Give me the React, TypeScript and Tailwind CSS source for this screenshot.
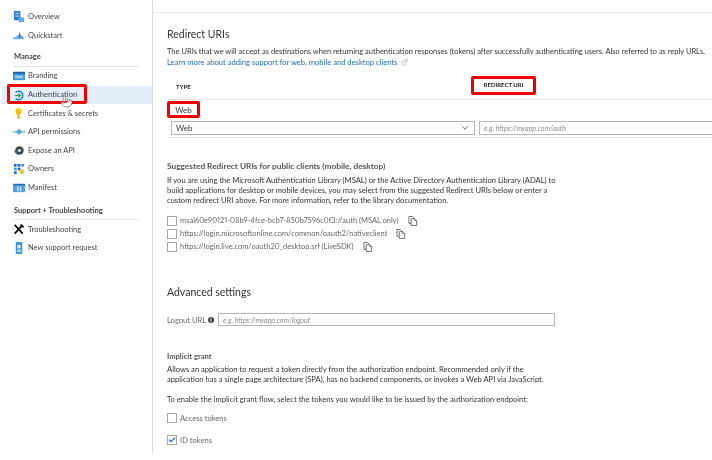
import { ChevronDown, Check, ExternalLink, Pointer } from "lucide-react";

function OverviewIcon() {
  return (
    <svg width="12" height="12" viewBox="0 0 13 13">
      <rect x="1" y="0" width="7" height="10" fill="#2f7fd0" />
      <rect x="2.5" y="2" width="4" height="1" fill="#cfe4f7" />
      <rect x="2.5" y="5" width="4" height="1" fill="#cfe4f7" />
      <rect x="6" y="7" width="6" height="5" fill="#5ea9e6" />
    </svg>
  );
}

function QuickstartIcon() {
  return (
    <svg width="12" height="12" viewBox="0 0 13 13">
      <path d="M0 10 C0 8 2 7 3 8 C4 5 6 5 7 7 C9 5 12 7 12 10 Z" fill="#6db3e6" />
      <path d="M7 2 L9 8 L6 8 Z" fill="#1f6fb5" />
    </svg>
  );
}

function BrandingIcon() {
  return (
    <svg width="12" height="12" viewBox="0 0 13 13">
      <rect x="0" y="2" width="13" height="9" fill="#3c96dc" />
      <rect x="0" y="2" width="13" height="2" fill="#1b5f9e" />
      <rect x="2" y="6" width="9" height="3" fill="#9fd0f2" />
    </svg>
  );
}

function AuthIcon() {
  return (
    <svg width="11" height="11" viewBox="0 0 13 13" fill="none">
      <path d="M3 3 A5 5 0 1 1 3 10" stroke="#1f7fc4" strokeWidth="1.7" />
      <path d="M2 6.5 H8.5" stroke="#2e9e57" strokeWidth="1.5" />
      <path d="M6 4 L9 6.5 L6 9" stroke="#2e9e57" strokeWidth="1.3" />
    </svg>
  );
}

function CertIcon() {
  return (
    <svg width="11" height="11" viewBox="0 0 13 13">
      <circle cx="6.5" cy="4" r="3.6" fill="#f4c20d" />
      <rect x="5.4" y="6" width="2.2" height="6.5" fill="#e2a90b" />
    </svg>
  );
}

function ApiIcon() {
  return (
    <svg width="12" height="12" viewBox="0 0 13 13">
      <rect x="0" y="5.5" width="13" height="1.6" fill="#7fc4a0" />
      <path d="M6.5 3 L10 6.3 L6.5 9.6 L3 6.3 Z" fill="#4aa3df" />
    </svg>
  );
}

function ExposeIcon() {
  return (
    <svg width="12" height="12" viewBox="0 0 13 13">
      <circle cx="7" cy="6" r="4.6" fill="#3f4a50" />
      <circle cx="7" cy="6" r="1.7" fill="#dfe5e8" />
      <path d="M1 7 L4 4 L4 10 Z" fill="#59666d" />
    </svg>
  );
}

function OwnersIcon() {
  return (
    <svg width="12" height="12" viewBox="0 0 13 13">
      <rect x="1" y="1" width="3" height="3" fill="#1d6fb8" />
      <rect x="5" y="1" width="3" height="3" fill="#1d6fb8" />
      <rect x="9" y="1" width="3" height="3" fill="#3f97da" />
      <rect x="1" y="5" width="3" height="3" fill="#3f97da" />
      <rect x="5" y="5" width="3" height="3" fill="#1d6fb8" />
      <rect x="1" y="9" width="3" height="3" fill="#1d6fb8" />
      <circle cx="9.5" cy="9.5" r="2.6" fill="#d9cf3c" />
    </svg>
  );
}

function ManifestIcon() {
  return (
    <svg width="12" height="12" viewBox="0 0 13 13">
      <rect x="0" y="2" width="13" height="9" fill="#4ea1de" />
      <rect x="0" y="2" width="13" height="1.5" fill="#2a6fa8" />
      <rect x="4.5" y="5" width="1.5" height="5" fill="#d7ecfa" />
      <rect x="7.5" y="5" width="1.5" height="5" fill="#d7ecfa" />
    </svg>
  );
}

function ToolsIcon() {
  return (
    <svg width="11" height="11" viewBox="0 0 13 13" fill="none" stroke="#111">
      <path d="M2 1 L11.5 11.5" strokeWidth="2.2" />
      <path d="M11 1.5 L2 11.5" strokeWidth="2.2" />
      <path d="M9 0.5 L12.5 4" strokeWidth="2" />
    </svg>
  );
}

function SupportIcon() {
  return (
    <svg width="12" height="12" viewBox="0 0 13 13">
      <rect x="3" y="0" width="7" height="13" rx="1" fill="#3c96dc" />
      <circle cx="6.5" cy="5" r="2" fill="#e6f3fc" />
      <rect x="4.5" y="8" width="4" height="3" fill="#a9d6f5" />
    </svg>
  );
}

// two overlapping pages, front one with a folded corner
function CopyPages() {
  return (
    <svg width="10" height="10" viewBox="0 0 11 11" fill="white" stroke="#555" strokeWidth="0.9" className="ml-[9px] shrink-0">
      <path d="M1 0.5 H5 L6 1.5 V8 H1 Z" />
      <path d="M3.5 3 H7.5 L9.5 5 V10.5 H3.5 Z" />
      <path d="M7.5 3 V5 H9.5" />
    </svg>
  );
}

const topItems = [
  { label: "Overview", icon: <OverviewIcon /> },
  { label: "Quickstart", icon: <QuickstartIcon /> },
];

const manageItems = [
  { label: "Branding", icon: <BrandingIcon /> },
  { label: "Authentication", icon: <AuthIcon />, active: true },
  { label: "Certificates & secrets", icon: <CertIcon /> },
  { label: "API permissions", icon: <ApiIcon /> },
  { label: "Expose an API", icon: <ExposeIcon /> },
  { label: "Owners", icon: <OwnersIcon /> },
  { label: "Manifest", icon: <ManifestIcon /> },
];

const supportItems = [
  { label: "Troubleshooting", icon: <ToolsIcon /> },
  { label: "New support request", icon: <SupportIcon /> },
];

const suggested = [
  "msal60e90121-08b9-4fce-bcb7-850b7596c0f3://auth (MSAL only)",
  "https://login.microsoftonline.com/common/oauth2/nativeclient",
  "https://login.live.com/oauth20_desktop.srf (LiveSDK)",
];

function NavRow({ label, icon, active }: { label: string; icon: React.ReactNode; active?: boolean }) {
  return (
    <div className={active ? "relative flex h-[18.6px] items-center bg-[#e3eefa] pl-[11px]" : "flex h-[18.6px] items-center pl-[11px]"}>
      <div className="flex w-[15px] shrink-0 justify-start">{icon}</div>
      <span className="text-[#444]">{label}</span>
      {active && <div className="absolute left-[5px] top-[-2px] h-[20px] w-[80px] rounded-[2px] border-[3px] border-[#f00000]" />}
      {active && <Pointer size={13} strokeWidth={1} color="#444" className="absolute left-[58px] top-[9px] fill-white" />}
    </div>
  );
}

function Checkbox({ checked }: { checked?: boolean }) {
  return (
    <div className="flex h-[10px] w-[10px] shrink-0 items-center justify-center border border-[#a6a6a6] bg-white">
      {checked && <Check size={10} strokeWidth={3.5} color="#0f6fc6" />}
    </div>
  );
}

export default function App() {
  return (
    <div className="flex h-[460px] w-[712px] overflow-hidden bg-white font-['Lato',sans-serif] text-[7.6px] leading-[10px] text-[#333] blur-[0.35px]">
      <aside className="h-[453px] w-[153px] shrink-0 border-r border-[#dcdcdc] pl-[2px] pt-[8px] text-[7.5px]">
        {topItems.map((item) => (
          <NavRow key={item.label} {...item} />
        ))}
        <div className="ml-[12px] mr-[14px] mt-[7px] border-b border-[#e2e2e2] pb-[4px] font-bold text-[#444]">Manage</div>
        {manageItems.map((item) => (
          <NavRow key={item.label} {...item} />
        ))}
        <div className="ml-[12px] mr-[14px] mt-[9px] border-b border-[#e2e2e2] pb-[3px] font-bold text-[#444]">Support + Troubleshooting</div>
        {supportItems.map((item) => (
          <NavRow key={item.label} {...item} />
        ))}
      </aside>

      <main className="min-w-0 flex-1">
        <div className="h-[13px] border-b border-[#ececec]" />
        <div className="pl-[14px]">
          <h1 className="mt-[14px] text-[10.5px] leading-[14px] text-[#333]">Redirect URIs</h1>
          <p className="mt-[6px] whitespace-nowrap text-[7.5px] text-[#333]">
            The URIs that we will accept as destinations when returning authentication responses (tokens) after successfully authenticating users. Also referred to as reply URLs.
          </p>
          <a className="flex items-center gap-[4px] whitespace-nowrap text-[#1f6fb5]">
            Learn more about adding support for web, mobile and desktop clients
            <ExternalLink size={7} color="#9aa5b1" />
          </a>

          <div className="mt-[8px] flex h-[25px] items-center border-b border-[#e4e4e4] text-[6px] font-bold text-[#222]">
            <span className="ml-[9px] w-[295px]">TYPE</span>
            <span className="flex h-[19px] w-[65px] translate-y-[-2px] items-center justify-center rounded-[2px] border-[3px] border-[#f00000]">REDIRECT URI</span>
          </div>

          <div className="mt-[1px] flex h-[17px] w-[33px] items-center justify-center rounded-[2px] border-[3px] border-[#f00000] text-[8px] text-[#333]">Web</div>

          <div className="ml-[4px] mt-[3px] flex gap-[4px]">
            <div className="flex h-[14px] w-[304px] items-center justify-between border border-[#b5b5b5] px-[4px] text-[8px]">
              <span>Web</span>
              <ChevronDown size={10} color="#444" />
            </div>
            <div className="flex h-[14px] flex-1 items-center border border-r-0 border-[#b5b5b5] px-[4px] text-[7px] italic text-[#8a8a8a]">e.g. https://myapp.com/auth</div>
          </div>
          <div className="mt-[2px] border-b border-[#e4e4e4]" />

          <h2 className="mt-[23px] text-[8.3px] font-bold text-[#555]">Suggested Redirect URIs for public clients (mobile, desktop)</h2>
          <p className="mt-[4px] whitespace-nowrap text-[#333]">
            If you are using the Microsoft Authentication Library (MSAL) or the Active Directory Authentication Library (ADAL) to
            <br />
            build applications for desktop or mobile devices, you may select from the suggested Redirect URIs below or enter a
            <br />
            custom redirect URI above. For more information, refer to the library documentation.
          </p>
          <div className="mt-[11px] flex flex-col gap-[3px]">
            {suggested.map((uri) => (
              <div key={uri} className="flex h-[10px] items-center">
                <Checkbox />
                <span className="ml-[3px] text-[7.5px] text-[#666] [font-variant-numeric:proportional-nums]">{uri}</span>
                <CopyPages />
              </div>
            ))}
          </div>

          <h2 className="mt-[33px] text-[10.5px] leading-[14px] text-[#333]">Advanced settings</h2>
          <div className="mt-[14px] flex items-center">
            <span className="w-[38px] whitespace-nowrap text-[#666]">Logout URL</span>
            <div className="ml-[3px] flex h-[6px] w-[6px] items-center justify-center rounded-full bg-[#444] text-[5px] font-bold text-white">i</div>
            <div className="ml-[4px] flex h-[13px] w-[337px] items-center border border-[#b5b5b5] px-[4px] text-[7px] italic text-[#8a8a8a]">e.g. https://myapp.com/logout</div>
          </div>

          <h2 className="mt-[25px] font-bold text-[#555]">Implicit grant</h2>
          <p className="mt-[3px] whitespace-nowrap text-[#333]">
            Allows an application to request a token directly from the authorization endpoint. Recommended only if the
            <br />
            application has a single page architecture (SPA), has no backend components, or invokes a Web API via JavaScript.
          </p>
          <p className="mt-[10px] text-[#333]">To enable the implicit grant flow, select the tokens you would like to be issued by the authorization endpoint:</p>
          <div className="mt-[9px] flex items-center gap-[3px] text-[#666]">
            <Checkbox />
            Access tokens
          </div>
          <div className="mt-[12px] flex items-center gap-[3px] text-[#666]">
            <Checkbox checked />
            ID tokens
          </div>
        </div>
      </main>
    </div>
  );
}
